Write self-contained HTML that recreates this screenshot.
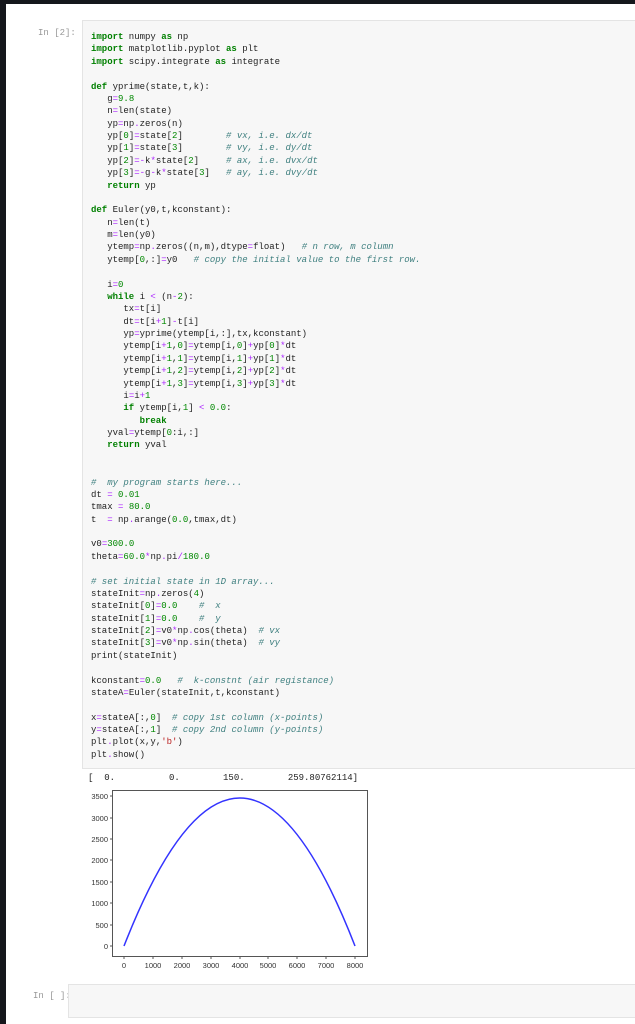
<!DOCTYPE html>
<html><head><meta charset="utf-8"><style>
*{margin:0;padding:0;box-sizing:border-box}
body{width:635px;height:1024px;background:#fff;position:relative;overflow:hidden;font-family:"Liberation Mono",monospace}
#top{position:absolute;left:0;top:0;width:635px;height:4px;background:#15171c}
#left{position:absolute;left:0;top:0;width:6px;height:1024px;background:#15171c}
.cell{position:absolute;background:#f7f7f7;border:1px solid #e4e4e4}
.lbl{position:absolute;font-size:9px;color:#999}
pre{position:absolute;left:91px;top:31px;font-family:"Liberation Mono",monospace;font-size:9px;line-height:12.37px;color:#222}
.k{color:#008000;font-weight:bold}.n{color:#080}.o{color:#a2f}.c{color:#408080;font-style:italic}.s{color:#ba2121}
.out{position:absolute;left:88px;top:773px;font-size:9px;color:#222;white-space:pre}
</style></head><body>
<div id="top"></div><div id="left"></div>
<div class="lbl" style="left:38px;top:28px">In [2]:</div>
<div class="cell" style="left:82px;top:20px;width:560px;height:749px"></div>
<pre><span class="k">import</span> numpy <span class="k">as</span> np
<span class="k">import</span> matplotlib.pyplot <span class="k">as</span> plt
<span class="k">import</span> scipy.integrate <span class="k">as</span> integrate

<span class="k">def</span> yprime(state,t,k):
   g<span class="o">=</span><span class="n">9.8</span>
   n<span class="o">=</span>len(state)
   yp<span class="o">=</span>np<span class="o">.</span>zeros(n)
   yp[<span class="n">0</span>]<span class="o">=</span>state[<span class="n">2</span>]        <span class="c"># vx, i.e. dx/dt</span>
   yp[<span class="n">1</span>]<span class="o">=</span>state[<span class="n">3</span>]        <span class="c"># vy, i.e. dy/dt</span>
   yp[<span class="n">2</span>]<span class="o">=-</span>k<span class="o">*</span>state[<span class="n">2</span>]     <span class="c"># ax, i.e. dvx/dt</span>
   yp[<span class="n">3</span>]<span class="o">=-</span>g<span class="o">-</span>k<span class="o">*</span>state[<span class="n">3</span>]   <span class="c"># ay, i.e. dvy/dt</span>
   <span class="k">return</span> yp

<span class="k">def</span> Euler(y0,t,kconstant):
   n<span class="o">=</span>len(t)
   m<span class="o">=</span>len(y0)
   ytemp<span class="o">=</span>np<span class="o">.</span>zeros((n,m),dtype<span class="o">=</span>float)   <span class="c"># n row, m column</span>
   ytemp[<span class="n">0</span>,:]<span class="o">=</span>y0   <span class="c"># copy the initial value to the first row.</span>

   i<span class="o">=</span><span class="n">0</span>
   <span class="k">while</span> i <span class="o">&lt;</span> (n<span class="o">-</span><span class="n">2</span>):
      tx<span class="o">=</span>t[i]
      dt<span class="o">=</span>t[i<span class="o">+</span><span class="n">1</span>]<span class="o">-</span>t[i]
      yp<span class="o">=</span>yprime(ytemp[i,:],tx,kconstant)
      ytemp[i<span class="o">+</span><span class="n">1</span>,<span class="n">0</span>]<span class="o">=</span>ytemp[i,<span class="n">0</span>]<span class="o">+</span>yp[<span class="n">0</span>]<span class="o">*</span>dt
      ytemp[i<span class="o">+</span><span class="n">1</span>,<span class="n">1</span>]<span class="o">=</span>ytemp[i,<span class="n">1</span>]<span class="o">+</span>yp[<span class="n">1</span>]<span class="o">*</span>dt
      ytemp[i<span class="o">+</span><span class="n">1</span>,<span class="n">2</span>]<span class="o">=</span>ytemp[i,<span class="n">2</span>]<span class="o">+</span>yp[<span class="n">2</span>]<span class="o">*</span>dt
      ytemp[i<span class="o">+</span><span class="n">1</span>,<span class="n">3</span>]<span class="o">=</span>ytemp[i,<span class="n">3</span>]<span class="o">+</span>yp[<span class="n">3</span>]<span class="o">*</span>dt
      i<span class="o">=</span>i<span class="o">+</span><span class="n">1</span>
      <span class="k">if</span> ytemp[i,<span class="n">1</span>] <span class="o">&lt;</span> <span class="n">0.0</span>:
         <span class="k">break</span>
   yval<span class="o">=</span>ytemp[<span class="n">0</span>:i,:]
   <span class="k">return</span> yval


<span class="c">#  my program starts here...</span>
dt <span class="o">=</span> <span class="n">0.01</span>
tmax <span class="o">=</span> <span class="n">80.0</span>
t  <span class="o">=</span> np<span class="o">.</span>arange(<span class="n">0.0</span>,tmax,dt)

v0<span class="o">=</span><span class="n">300.0</span>
theta<span class="o">=</span><span class="n">60.0</span><span class="o">*</span>np<span class="o">.</span>pi<span class="o">/</span><span class="n">180.0</span>

<span class="c"># set initial state in 1D array...</span>
stateInit<span class="o">=</span>np<span class="o">.</span>zeros(<span class="n">4</span>)
stateInit[<span class="n">0</span>]<span class="o">=</span><span class="n">0.0</span>    <span class="c">#  x</span>
stateInit[<span class="n">1</span>]<span class="o">=</span><span class="n">0.0</span>    <span class="c">#  y</span>
stateInit[<span class="n">2</span>]<span class="o">=</span>v0<span class="o">*</span>np<span class="o">.</span>cos(theta)  <span class="c"># vx</span>
stateInit[<span class="n">3</span>]<span class="o">=</span>v0<span class="o">*</span>np<span class="o">.</span>sin(theta)  <span class="c"># vy</span>
print(stateInit)

kconstant<span class="o">=</span><span class="n">0.0</span>   <span class="c">#  k-constnt (air registance)</span>
stateA<span class="o">=</span>Euler(stateInit,t,kconstant)

x<span class="o">=</span>stateA[:,<span class="n">0</span>]  <span class="c"># copy 1st column (x-points)</span>
y<span class="o">=</span>stateA[:,<span class="n">1</span>]  <span class="c"># copy 2nd column (y-points)</span>
plt<span class="o">.</span>plot(x,y,<span class="s">'b'</span>)
plt<span class="o">.</span>show()</pre>
<div class="out">[  0.          0.        150.        259.80762114]</div>
<svg style="position:absolute;left:0;top:0" width="635" height="1024">
<rect x="112.5" y="790.5" width="255" height="166" fill="#fff" stroke="#555" stroke-width="1"/>
<path d="M124,946 Q240,650 355,946" fill="none" stroke="#33f" stroke-width="1.5"/>
<g font-family="Liberation Sans, sans-serif" font-size="7.5" fill="#333">
<g text-anchor="end">
<text x="108" y="949">0</text><text x="108" y="928">500</text><text x="108" y="906">1000</text><text x="108" y="885">1500</text><text x="108" y="863">2000</text><text x="108" y="842">2500</text><text x="108" y="821">3000</text><text x="108" y="799">3500</text>
</g>
<g text-anchor="middle">
<text x="124" y="968">0</text><text x="153" y="968">1000</text><text x="182" y="968">2000</text><text x="211" y="968">3000</text><text x="240" y="968">4000</text><text x="268" y="968">5000</text><text x="297" y="968">6000</text><text x="326" y="968">7000</text><text x="355" y="968">8000</text>
</g></g>
<g stroke="#555" stroke-width="1">
<path d="M110,946H112M110,925H112M110,903H112M110,882H112M110,860H112M110,839H112M110,818H112M110,796H112"/>
<path d="M124,957V959M153,957V959M182,957V959M211,957V959M240,957V959M268,957V959M297,957V959M326,957V959M355,957V959"/>
</g>
</svg>
<div class="lbl" style="left:33px;top:991px">In [ ]:</div>
<div class="cell" style="left:68px;top:984px;width:575px;height:34px"></div>
</body></html>
